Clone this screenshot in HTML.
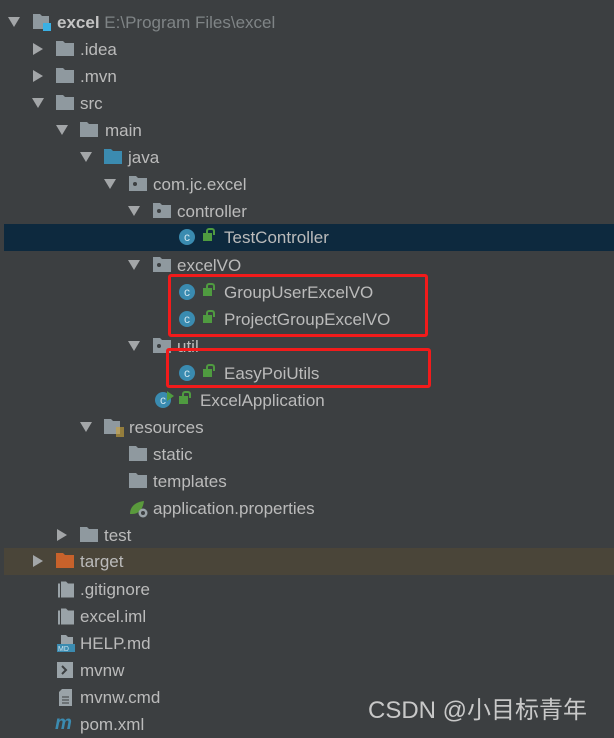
<!DOCTYPE html>
<html><head><meta charset="utf-8"><style>
body{margin:0;width:614px;height:726px;background:#3c3f41;overflow:hidden;position:relative;font-family:"Liberation Sans","Noto Sans CJK SC",sans-serif;}
#w{position:absolute;left:0;top:2px;width:614px;height:730px;}
.r{position:absolute;left:0;right:0;height:27px;}
.t{position:absolute;top:4px;font-size:17px;color:#bbbbbb;white-space:nowrap;line-height:19px;}
.a{position:absolute;top:8px;width:0;height:0;}
.ad{border-left:6px solid transparent;border-right:6px solid transparent;border-top:10px solid #a3a6a8;}
.ar{border-top:6px solid transparent;border-bottom:6px solid transparent;border-left:10px solid #a3a6a8;top:7px;}
.f{position:absolute;top:5px;}
.c{position:absolute;top:5px;width:16px;height:16px;border-radius:50%;background:#3a8bb0;color:#cfe5ef;font-size:12px;line-height:16px;text-align:center;}
.l{position:absolute;top:9px;width:9px;height:8px;background:#4f9b40;}
.l:before{content:"";position:absolute;left:3px;top:-5px;width:5px;height:5px;border:2px solid #4f9b40;border-bottom:none;border-radius:3px 3px 0 0;}
.box{position:absolute;border:3px solid #f21b1b;border-radius:3px;}
</style></head><body>
<svg width="0" height="0" style="position:absolute"><defs>
<symbol id="fd" viewBox="0 0 18 15"><path d="M0 0h7l2 2h9v13H0z" fill="#8f999f"/></symbol>
<symbol id="fj" viewBox="0 0 18 15"><path d="M0 0h7l2 2h9v13H0z" fill="#3b8bb0"/></symbol>
<symbol id="fp" viewBox="0 0 18 15"><path d="M0 0h7l2 2h9v13H0z" fill="#8f999f"/><circle cx="6" cy="8" r="2" fill="#3c3f41"/></symbol>
<symbol id="ft" viewBox="0 0 18 15"><path d="M0 0h7l2 2h9v13H0z" fill="#c8622b"/></symbol>
<symbol id="fl" viewBox="0 0 18 16"><path d="M3 0h5l2 2h6v14H3z" fill="#9aa3a8"/><path d="M0 2v14h2V2z" fill="#9aa3a8"/></symbol>
</defs></svg>
<div id="w">
<div class="r" style="top:7px"><div class="a ad" style="left:8px"></div><svg class="f" style="left:33px" width="18" height="17" viewBox="0 0 18 17"><path d="M0 0h7l2 2h7v13H0z" fill="#8f999f"/><rect x="10" y="9" width="8" height="8" fill="#3ab0e4"/></svg><div class="t" style="left:57px"><b style="color:#c4c4c4">excel</b> <span style="color:#7f8486">E:\Program Files\excel</span></div></div>
<div class="r" style="top:34px"><div class="a ar" style="left:33px"></div><svg class="f" style="left:56px" width="18" height="15"><use href="#fd"/></svg><div class="t" style="left:80px">.idea</div></div>
<div class="r" style="top:61px"><div class="a ar" style="left:33px"></div><svg class="f" style="left:56px" width="18" height="15"><use href="#fd"/></svg><div class="t" style="left:80px">.mvn</div></div>
<div class="r" style="top:88px"><div class="a ad" style="left:32px"></div><svg class="f" style="left:56px" width="18" height="15"><use href="#fd"/></svg><div class="t" style="left:80px">src</div></div>
<div class="r" style="top:115px"><div class="a ad" style="left:56px"></div><svg class="f" style="left:80px" width="18" height="15"><use href="#fd"/></svg><div class="t" style="left:105px">main</div></div>
<div class="r" style="top:142px"><div class="a ad" style="left:80px"></div><svg class="f" style="left:104px" width="18" height="15"><use href="#fj"/></svg><div class="t" style="left:128px">java</div></div>
<div class="r" style="top:169px"><div class="a ad" style="left:104px"></div><svg class="f" style="left:129px" width="18" height="15"><use href="#fp"/></svg><div class="t" style="left:153px">com.jc.excel</div></div>
<div class="r" style="top:196px"><div class="a ad" style="left:128px"></div><svg class="f" style="left:153px" width="18" height="15"><use href="#fp"/></svg><div class="t" style="left:177px">controller</div></div>
<div class="r" style="top:222px;background:#0d293e;left:4px"><div class="c" style="left:175px">c</div><div class="l" style="left:199px"></div><div class="t" style="left:220px">TestController</div></div>
<div class="r" style="top:250px"><div class="a ad" style="left:128px"></div><svg class="f" style="left:153px" width="18" height="15"><use href="#fp"/></svg><div class="t" style="left:177px">excelVO</div></div>
<div class="r" style="top:277px"><div class="c" style="left:179px">c</div><div class="l" style="left:203px"></div><div class="t" style="left:224px">GroupUserExcelVO</div></div>
<div class="r" style="top:304px"><div class="c" style="left:179px">c</div><div class="l" style="left:203px"></div><div class="t" style="left:224px">ProjectGroupExcelVO</div></div>
<div class="r" style="top:331px"><div class="a ad" style="left:128px"></div><svg class="f" style="left:153px" width="18" height="15"><use href="#fp"/></svg><div class="t" style="left:177px">util</div></div>
<div class="r" style="top:358px"><div class="c" style="left:179px">c</div><div class="l" style="left:203px"></div><div class="t" style="left:224px">EasyPoiUtils</div></div>
<div class="r" style="top:385px"><div class="c" style="left:155px">c</div><div style="position:absolute;left:167px;top:4px;width:0;height:0;border-top:5px solid transparent;border-bottom:5px solid transparent;border-left:7px solid #4f9b40"></div><div class="l" style="left:179px"></div><div class="t" style="left:200px">ExcelApplication</div></div>
<div class="r" style="top:412px"><div class="a ad" style="left:80px"></div><svg class="f" style="left:104px" width="22" height="18" viewBox="0 0 22 18"><path d="M0 0h7l2 2h7v13H0z" fill="#8f999f"/><path d="M12 9h8M12 11h8M12 13h8M12 15h8M12 17h8" stroke="#c9a23a" stroke-width="1.2"/></svg><div class="t" style="left:129px">resources</div></div>
<div class="r" style="top:439px"><svg class="f" style="left:129px" width="18" height="15"><use href="#fd"/></svg><div class="t" style="left:153px">static</div></div>
<div class="r" style="top:466px"><svg class="f" style="left:129px" width="18" height="15"><use href="#fd"/></svg><div class="t" style="left:153px">templates</div></div>
<div class="r" style="top:493px"><svg class="f" style="left:128px" width="20" height="18" viewBox="0 0 20 18"><path d="M2 14C2 6 8 2 16 1c-1 8-5 13-12 13z" fill="#5a9a3c"/><circle cx="15" cy="13" r="4.5" fill="#9aa3a8"/><circle cx="15" cy="13" r="2" fill="#3c3f41"/></svg><div class="t" style="left:153px">application.properties</div></div>
<div class="r" style="top:520px"><div class="a ar" style="left:57px"></div><svg class="f" style="left:80px" width="18" height="15"><use href="#fd"/></svg><div class="t" style="left:104px">test</div></div>
<div class="r" style="top:546px;background:#4a4539;left:4px"><div class="a ar" style="left:29px"></div><svg class="f" style="left:52px" width="18" height="15"><use href="#ft"/></svg><div class="t" style="left:76px">target</div></div>
<div class="r" style="top:574px"><svg class="f" style="left:58px" width="18" height="17"><use href="#fl"/></svg><div class="t" style="left:80px">.gitignore</div></div>
<div class="r" style="top:601px"><svg class="f" style="left:58px" width="18" height="17"><use href="#fl"/></svg><div class="t" style="left:80px">excel.iml</div></div>
<div class="r" style="top:628px"><svg class="f" style="left:56px" width="20" height="17" viewBox="0 0 20 17"><path d="M5 0h5l2 2h5v8H5z" fill="#9aa3a8"/><rect x="1" y="9" width="18" height="8" fill="#3b8bb0"/><text x="2" y="16" font-size="7" fill="#d0e6ef" font-family="Liberation Sans">MD</text></svg><div class="t" style="left:80px">HELP.md</div></div>
<div class="r" style="top:655px"><svg class="f" style="left:57px" width="16" height="16"><rect width="16" height="16" fill="#9aa3a8"/><path d="M5 4l4 4-4 4" stroke="#3c3f41" stroke-width="2" fill="none"/></svg><div class="t" style="left:80px">mvnw</div></div>
<div class="r" style="top:682px"><svg class="f" style="left:59px" width="13" height="17"><path d="M3 0h10v17H0V3z" fill="#9aa3a8"/><path d="M3 8h7M3 11h7M3 14h7" stroke="#3c3f41"/></svg><div class="t" style="left:80px">mvnw.cmd</div></div>
<div class="r" style="top:709px"><div style="position:absolute;left:55px;top:2px;font:italic bold 19px 'Liberation Sans',sans-serif;color:#3b8bb0">m</div><div class="t" style="left:80px">pom.xml</div></div>
</div>
<div class="box" style="left:168px;top:274px;width:254px;height:57px"></div>
<div class="box" style="left:166px;top:348px;width:259px;height:34px"></div>
<div style="position:absolute;left:368px;top:690px;font-size:24px;color:#c8c8c8;font-family:'Liberation Sans','Noto Sans CJK SC',sans-serif;white-space:nowrap">CSDN @小目标青年</div>
</body></html>
